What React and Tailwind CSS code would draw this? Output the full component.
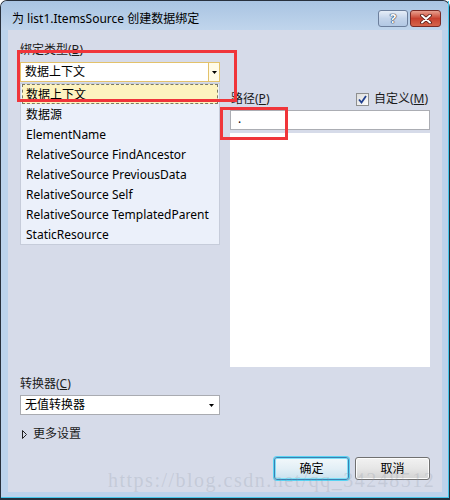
import React from "react";

function Arrow() {
  return (
    <svg width="5" height="3" viewBox="0 0 5 3" className="block">
      <path d="M0 0 H5 L2.5 3 Z" fill="#000" />
    </svg>
  );
}

export default function App() {
  const items = [
    "数据源",
    "ElementName",
    "RelativeSource FindAncestor",
    "RelativeSource PreviousData",
    "RelativeSource Self",
    "RelativeSource TemplatedParent",
    "StaticResource",
  ];
  return (
    <div className="relative w-[450px] h-[500px] overflow-hidden bg-white font-['Noto_Sans','Noto_Sans_CJK_SC',sans-serif] text-[12px] leading-[16px] text-[#1a1a1a]">
      <div className="flex h-full w-full flex-col rounded-t-[7px] border-x border-t border-b-[2px] border-[#27303c] bg-[#bcd3ec]">
        <div className="flex h-full flex-col border-r border-b border-[#45c6ea]">
          {/* Title bar */}
          <div className="flex h-[29px] shrink-0 items-start justify-between bg-gradient-to-b from-[#a9c4e2] to-[#c0d5ec] pl-[11px] pr-[7px] rounded-t-[6px]">
            <div className="pt-[10px] text-[12px] leading-[16px] text-black">
              为 list1.ItemsSource 创建数据绑定
            </div>
            <div className="flex gap-[2px] pt-[9px]">
              <div className="flex h-[17px] w-[30px] items-center justify-center rounded-[3px] border border-[#6c7f9c] bg-gradient-to-b from-[#e6eef8] via-[#c3d4ea] to-[#b2c8e4]">
                <span className="text-[13px] font-bold leading-none text-white [text-shadow:0_0_1px_#1b2a44,0_0_1px_#1b2a44,0_0_1px_#1b2a44]">
                  ?
                </span>
              </div>
              <div className="flex h-[17px] w-[31px] items-center justify-center rounded-[3px] border border-[#7a2a25] bg-gradient-to-b from-[#e8a090] via-[#c7402f] to-[#d5654c]">
                <svg width="12" height="10" viewBox="0 0 12 10">
                  <path d="M2 1.5 L10 8.5 M10 1.5 L2 8.5" stroke="#4a1510" strokeWidth="3.6" strokeLinecap="round" />
                  <path d="M2 1.5 L10 8.5 M10 1.5 L2 8.5" stroke="#ffffff" strokeWidth="2" strokeLinecap="round" />
                </svg>
              </div>
            </div>
          </div>

          {/* Content */}
          <div className="mx-[6px] ml-[7px] mb-[5px] flex flex-1 flex-col bg-[#d6dbe9] px-[12px] pt-[12px]">
            <div className="flex gap-[10px]">
              <div className="w-[200px]">
                <div className="h-[16px]">
                  绑定类型(<span className="underline">B</span>)
                </div>
                <div className="mt-[4px] flex h-[20px] border border-[#e3c26b] bg-white">
                  <div className="flex-1 pl-[4px] text-[12px] leading-[18px] text-black">数据上下文</div>
                  <div className="flex w-[11px] items-center justify-center border-l border-[#e3c26b] bg-[#fffbe8]">
                    <Arrow />
                  </div>
                </div>
              </div>
              <div className="w-[200px] pt-[49px]">
                <div className="flex h-[16px] items-center justify-between">
                  <div className="pl-[1px]">
                    路径(<span className="underline">P</span>)
                  </div>
                  <div className="flex items-center gap-[5px]">
                    <div className="flex h-[13px] w-[13px] items-center justify-center border border-[#8e8f8f] bg-gradient-to-br from-[#dcdcdc] to-[#fdfdfd]">
                      <svg width="9" height="9" viewBox="0 0 9 9">
                        <path d="M1 4.5 L3.5 7.5 L8 1" stroke="#21408f" strokeWidth="1.8" fill="none" />
                      </svg>
                    </div>
                    <div className="pr-[2px]">
                      自定义(<span className="underline">M</span>)
                    </div>
                  </div>
                </div>
                <div className="mt-[3px] h-[20px] border border-[#abadb3] bg-white pl-[7px] leading-[16px] text-black">
                  .
                </div>
                <div className="mt-[3px] h-[234px] bg-white"></div>
              </div>
            </div>

            <div className="mt-[9px] h-[16px]">
              转换器(<span className="underline">C</span>)
            </div>
            <div className="mt-[3px] flex h-[20px] w-[200px] items-center justify-between border border-[#a9abb1] bg-white pl-[4px] pr-[5px]">
              <span className="text-black">无值转换器</span>
              <Arrow />
            </div>

            <div className="mt-[11px] flex h-[16px] items-center gap-[6px] pl-[2px]">
              <svg width="5" height="9" viewBox="0 0 5 9">
                <path d="M0.5 0.5 L4.5 4.5 L0.5 8.5 Z" fill="none" stroke="#222" strokeWidth="1" />
              </svg>
              <span>更多设置</span>
            </div>

            <div className="mt-[15px] flex justify-end gap-[6px]">
              <div className="flex h-[23px] w-[75px] items-center justify-center rounded-[3px] border border-[#3c7fb1] bg-gradient-to-b from-[#f2f8fb] via-[#e3eff6] to-[#c9e2ef] text-black shadow-[0_0_0_1px_#59d3f3,inset_0_0_0_1px_#7fe0f7]">
                确定
              </div>
              <div className="flex h-[23px] w-[75px] items-center justify-center rounded-[3px] border border-[#707070] bg-gradient-to-b from-[#f2f2f2] via-[#e6e6e6] to-[#d2d2d2] text-black shadow-[inset_0_0_0_1px_#fcfcfc]">
                取消
              </div>
            </div>
          </div>
        </div>
      </div>

      {/* Dropdown list overlay */}
      <div className="absolute left-[20px] top-[83px] h-[162px] w-[200px] border border-[#c6ccda] bg-[#ebf0fa] text-black">
        <div className="mx-[1px] h-[20px] border border-dashed border-[#7d7a62] bg-[#fdf3bf] pl-[3px] leading-[19px]">
          数据上下文
        </div>
        {items.map((t) => (
          <div key={t} className="h-[20px] pl-[5px] leading-[22px]">
            {t}
          </div>
        ))}
      </div>

      {/* Red annotation boxes */}
      <div className="pointer-events-none absolute left-[17px] top-[50px] h-[52px] w-[220px] border-[3px] border-[#f0353a]"></div>
      <div className="pointer-events-none absolute left-[220px] top-[107px] h-[33px] w-[68px] border-[3px] border-[#f0353a]"></div>

      {/* Watermark */}
      <div className="pointer-events-none absolute left-[108px] top-[468px] font-['Liberation_Serif',serif] text-[20px] leading-[24px] tracking-[1.5px] text-[#9098a8]/25">
        https://blog.csdn.net/qq_34248512
      </div>
    </div>
  );
}
